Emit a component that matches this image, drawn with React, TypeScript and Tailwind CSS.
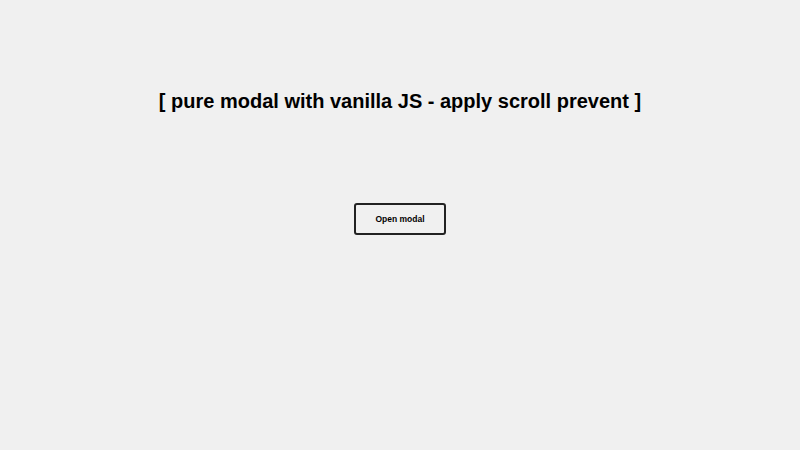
import React from 'react';

export default function App() {
  return (
    <div className="min-h-[450px] w-full bg-[#f0f0f0] font-['Liberation_Sans',Arial,sans-serif] text-black">
      <div className="flex flex-col items-center pt-[89px]">
        <h1 className="text-[20px] font-bold leading-[24px]">[ pure modal with vanilla JS - apply scroll prevent ]</h1>
        <button className="mt-[90px] h-[32px] w-[92px] rounded-[3px] border-2 border-[#222] bg-[#f0f0f0] text-[8.5px] font-bold">
          Open modal
        </button>
      </div>
    </div>
  );
}
